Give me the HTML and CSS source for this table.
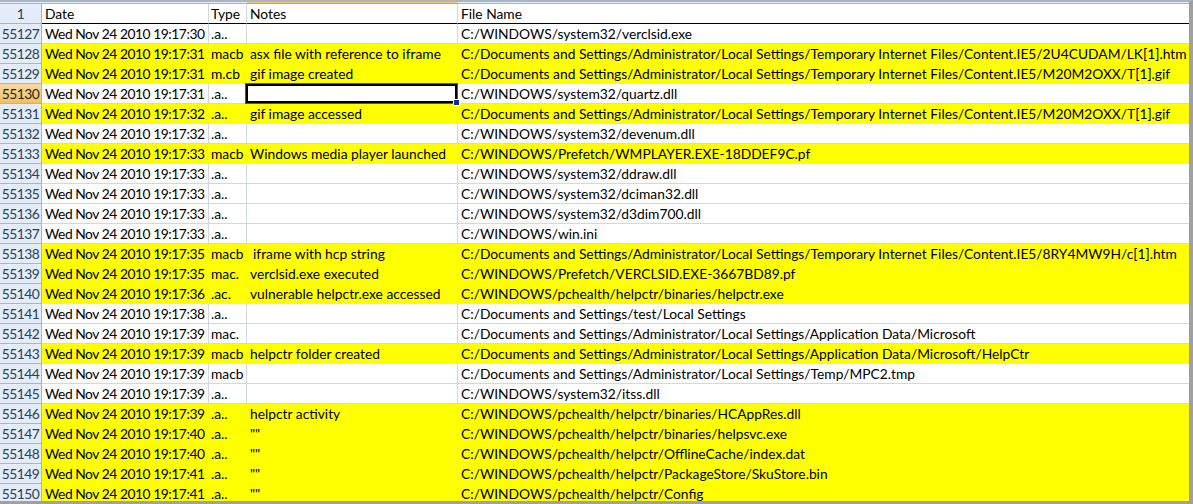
FILE: index.html
```html
<!DOCTYPE html>
<html>
<head>
<meta charset="utf-8">
<link rel="stylesheet" href="styles.css">
</head>
<body>
<div class="frame">
  <div class="sheet">
    <div class="colbar">
      <span class="c-rh"></span><span class="c-date"></span><span class="c-type"></span><span class="c-notes on"></span><span class="c-file"></span>
    </div>
    <div class="row head">
      <div class="rh">1</div><div class="cell date">Date</div><div class="cell type">Type</div><div class="cell notes">Notes</div><div class="cell file">File Name</div>
    </div>
    <div class="row"><div class="rh">55127</div><div class="cell date">Wed Nov 24 2010 19:17:30</div><div class="cell type">.a..</div><div class="cell notes"></div><div class="cell file">C:/WINDOWS/system32/verclsid.exe</div></div>
    <div class="row y"><div class="rh">55128</div><div class="cell date">Wed Nov 24 2010 19:17:31</div><div class="cell type">macb</div><div class="cell notes">asx file with reference to iframe</div><div class="cell file">C:/Documents and Settings/Administrator/Local Settings/Temporary Internet Files/Content.IE5/2U4CUDAM/LK[1].htm</div></div>
    <div class="row y"><div class="rh">55129</div><div class="cell date">Wed Nov 24 2010 19:17:31</div><div class="cell type">m.cb</div><div class="cell notes">gif image created</div><div class="cell file">C:/Documents and Settings/Administrator/Local Settings/Temporary Internet Files/Content.IE5/M20M2OXX/T[1].gif</div></div>
    <div class="row"><div class="rh sel">55130</div><div class="cell date">Wed Nov 24 2010 19:17:31</div><div class="cell type">.a..</div><div class="cell notes active"></div><div class="cell file">C:/WINDOWS/system32/quartz.dll</div></div>
    <div class="row y"><div class="rh">55131</div><div class="cell date">Wed Nov 24 2010 19:17:32</div><div class="cell type">.a..</div><div class="cell notes">gif image accessed</div><div class="cell file">C:/Documents and Settings/Administrator/Local Settings/Temporary Internet Files/Content.IE5/M20M2OXX/T[1].gif</div></div>
    <div class="row"><div class="rh">55132</div><div class="cell date">Wed Nov 24 2010 19:17:32</div><div class="cell type">.a..</div><div class="cell notes"></div><div class="cell file">C:/WINDOWS/system32/devenum.dll</div></div>
    <div class="row y"><div class="rh">55133</div><div class="cell date">Wed Nov 24 2010 19:17:33</div><div class="cell type">macb</div><div class="cell notes">Windows media player launched</div><div class="cell file">C:/WINDOWS/Prefetch/WMPLAYER.EXE-18DDEF9C.pf</div></div>
    <div class="row"><div class="rh">55134</div><div class="cell date">Wed Nov 24 2010 19:17:33</div><div class="cell type">.a..</div><div class="cell notes"></div><div class="cell file">C:/WINDOWS/system32/ddraw.dll</div></div>
    <div class="row"><div class="rh">55135</div><div class="cell date">Wed Nov 24 2010 19:17:33</div><div class="cell type">.a..</div><div class="cell notes"></div><div class="cell file">C:/WINDOWS/system32/dciman32.dll</div></div>
    <div class="row"><div class="rh">55136</div><div class="cell date">Wed Nov 24 2010 19:17:33</div><div class="cell type">.a..</div><div class="cell notes"></div><div class="cell file">C:/WINDOWS/system32/d3dim700.dll</div></div>
    <div class="row"><div class="rh">55137</div><div class="cell date">Wed Nov 24 2010 19:17:33</div><div class="cell type">.a..</div><div class="cell notes"></div><div class="cell file">C:/WINDOWS/win.ini</div></div>
    <div class="row y"><div class="rh">55138</div><div class="cell date">Wed Nov 24 2010 19:17:35</div><div class="cell type">macb</div><div class="cell notes lead">iframe with hcp string</div><div class="cell file">C:/Documents and Settings/Administrator/Local Settings/Temporary Internet Files/Content.IE5/8RY4MW9H/c[1].htm</div></div>
    <div class="row y"><div class="rh">55139</div><div class="cell date">Wed Nov 24 2010 19:17:35</div><div class="cell type">mac.</div><div class="cell notes">verclsid.exe executed</div><div class="cell file">C:/WINDOWS/Prefetch/VERCLSID.EXE-3667BD89.pf</div></div>
    <div class="row y"><div class="rh">55140</div><div class="cell date">Wed Nov 24 2010 19:17:36</div><div class="cell type">.ac.</div><div class="cell notes">vulnerable helpctr.exe accessed</div><div class="cell file">C:/WINDOWS/pchealth/helpctr/binaries/helpctr.exe</div></div>
    <div class="row"><div class="rh">55141</div><div class="cell date">Wed Nov 24 2010 19:17:38</div><div class="cell type">.a..</div><div class="cell notes"></div><div class="cell file">C:/Documents and Settings/test/Local Settings</div></div>
    <div class="row"><div class="rh">55142</div><div class="cell date">Wed Nov 24 2010 19:17:39</div><div class="cell type">mac.</div><div class="cell notes"></div><div class="cell file">C:/Documents and Settings/Administrator/Local Settings/Application Data/Microsoft</div></div>
    <div class="row y"><div class="rh">55143</div><div class="cell date">Wed Nov 24 2010 19:17:39</div><div class="cell type">macb</div><div class="cell notes">helpctr folder created</div><div class="cell file">C:/Documents and Settings/Administrator/Local Settings/Application Data/Microsoft/HelpCtr</div></div>
    <div class="row"><div class="rh">55144</div><div class="cell date">Wed Nov 24 2010 19:17:39</div><div class="cell type">macb</div><div class="cell notes"></div><div class="cell file">C:/Documents and Settings/Administrator/Local Settings/Temp/MPC2.tmp</div></div>
    <div class="row"><div class="rh">55145</div><div class="cell date">Wed Nov 24 2010 19:17:39</div><div class="cell type">.a..</div><div class="cell notes"></div><div class="cell file">C:/WINDOWS/system32/itss.dll</div></div>
    <div class="row y"><div class="rh">55146</div><div class="cell date">Wed Nov 24 2010 19:17:39</div><div class="cell type">.a..</div><div class="cell notes">helpctr activity</div><div class="cell file">C:/WINDOWS/pchealth/helpctr/binaries/HCAppRes.dll</div></div>
    <div class="row y"><div class="rh">55147</div><div class="cell date">Wed Nov 24 2010 19:17:40</div><div class="cell type">.a..</div><div class="cell notes">""</div><div class="cell file">C:/WINDOWS/pchealth/helpctr/binaries/helpsvc.exe</div></div>
    <div class="row y"><div class="rh">55148</div><div class="cell date">Wed Nov 24 2010 19:17:40</div><div class="cell type">.a..</div><div class="cell notes">""</div><div class="cell file">C:/WINDOWS/pchealth/helpctr/OfflineCache/index.dat</div></div>
    <div class="row y"><div class="rh">55149</div><div class="cell date">Wed Nov 24 2010 19:17:41</div><div class="cell type">.a..</div><div class="cell notes">""</div><div class="cell file">C:/WINDOWS/pchealth/helpctr/PackageStore/SkuStore.bin</div></div>
    <div class="row y"><div class="rh">55150</div><div class="cell date">Wed Nov 24 2010 19:17:41</div><div class="cell type">.a..</div><div class="cell notes">""</div><div class="cell file">C:/WINDOWS/pchealth/helpctr/Config</div></div>
  </div>
</div>
</body>
</html>
```

FILE: styles.css
```css
html, body {
  margin: 0;
  padding: 0;
  background: #ffffff;
}
.frame {
  width: 1193px;
  height: 504px;
  overflow: hidden;
  box-sizing: border-box;
  border-top: 2px solid #a9b4c2;
  border-right: 4px solid #a0a0a0;
  border-bottom: 3px solid #a0a0a0;
  background: #ffffff;
}
.sheet {
  width: 1189px;
  font-family: "Lato", "Liberation Sans", sans-serif;
  font-size: 13.8px;
  color: #000000;
}
.colbar {
  display: flex;
  height: 2px;
}
.colbar span {
  display: block;
  height: 1px;
  background: #e8eef6;
  border-bottom: 1px solid #9eb6ce;
}
.colbar .c-rh { width: 42px; }
.colbar .c-date { width: 167px; }
.colbar .c-type { width: 38px; }
.colbar .c-notes { width: 211px; }
.colbar .c-notes.on { background: #f7c978; border-bottom-color: #f29436; }
.colbar .c-file { flex: 1; }

.row {
  display: flex;
  height: 20px;
  box-sizing: border-box;
}
.rh {
  width: 42px;
  flex: none;
  box-sizing: border-box;
  background: #e4ecf7;
  border-right: 1px solid #9eb6ce;
  border-bottom: 1px solid #9eb6ce;
  color: #27415f;
  text-align: center;
  line-height: 19px;
  letter-spacing: -0.5px;
  white-space: nowrap;
  overflow: hidden;
}
.rh.sel {
  background: linear-gradient(#f9d99f, #f1c15f);
  color: #1f1f1f;
}
.cell {
  flex: none;
  box-sizing: border-box;
  border-right: 1px solid #d0d7e5;
  border-bottom: 1px solid #d0d7e5;
  line-height: 19px;
  padding-left: 3px;
  white-space: nowrap;
  position: relative;
}
.date { width: 167px; letter-spacing: -0.45px; overflow: hidden; }
.type { width: 38px; padding-left: 2px; overflow: hidden; }
.notes { width: 211px; }
.notes.lead { padding-left: 6px; }
.file { flex: 1; width: auto; border-right: none; }
.head .cell { border-bottom: 1px solid #000000; }
.head .date { letter-spacing: 0; }

.row.y .cell {
  background: #ffff00;
  border-color: #ffff00;
}
.active::after {
  content: "";
  position: absolute;
  left: -1px;
  top: 0;
  right: 0;
  bottom: 0;
  border: 2px solid #000000;
  box-shadow: 0 0 0 1px #3a4fc4;
}
.active::before {
  content: "";
  position: absolute;
  right: -3px;
  bottom: -3px;
  width: 5px;
  height: 5px;
  background: #1a2a9a;
  border: 1px solid #ffffff;
  z-index: 2;
}
```
